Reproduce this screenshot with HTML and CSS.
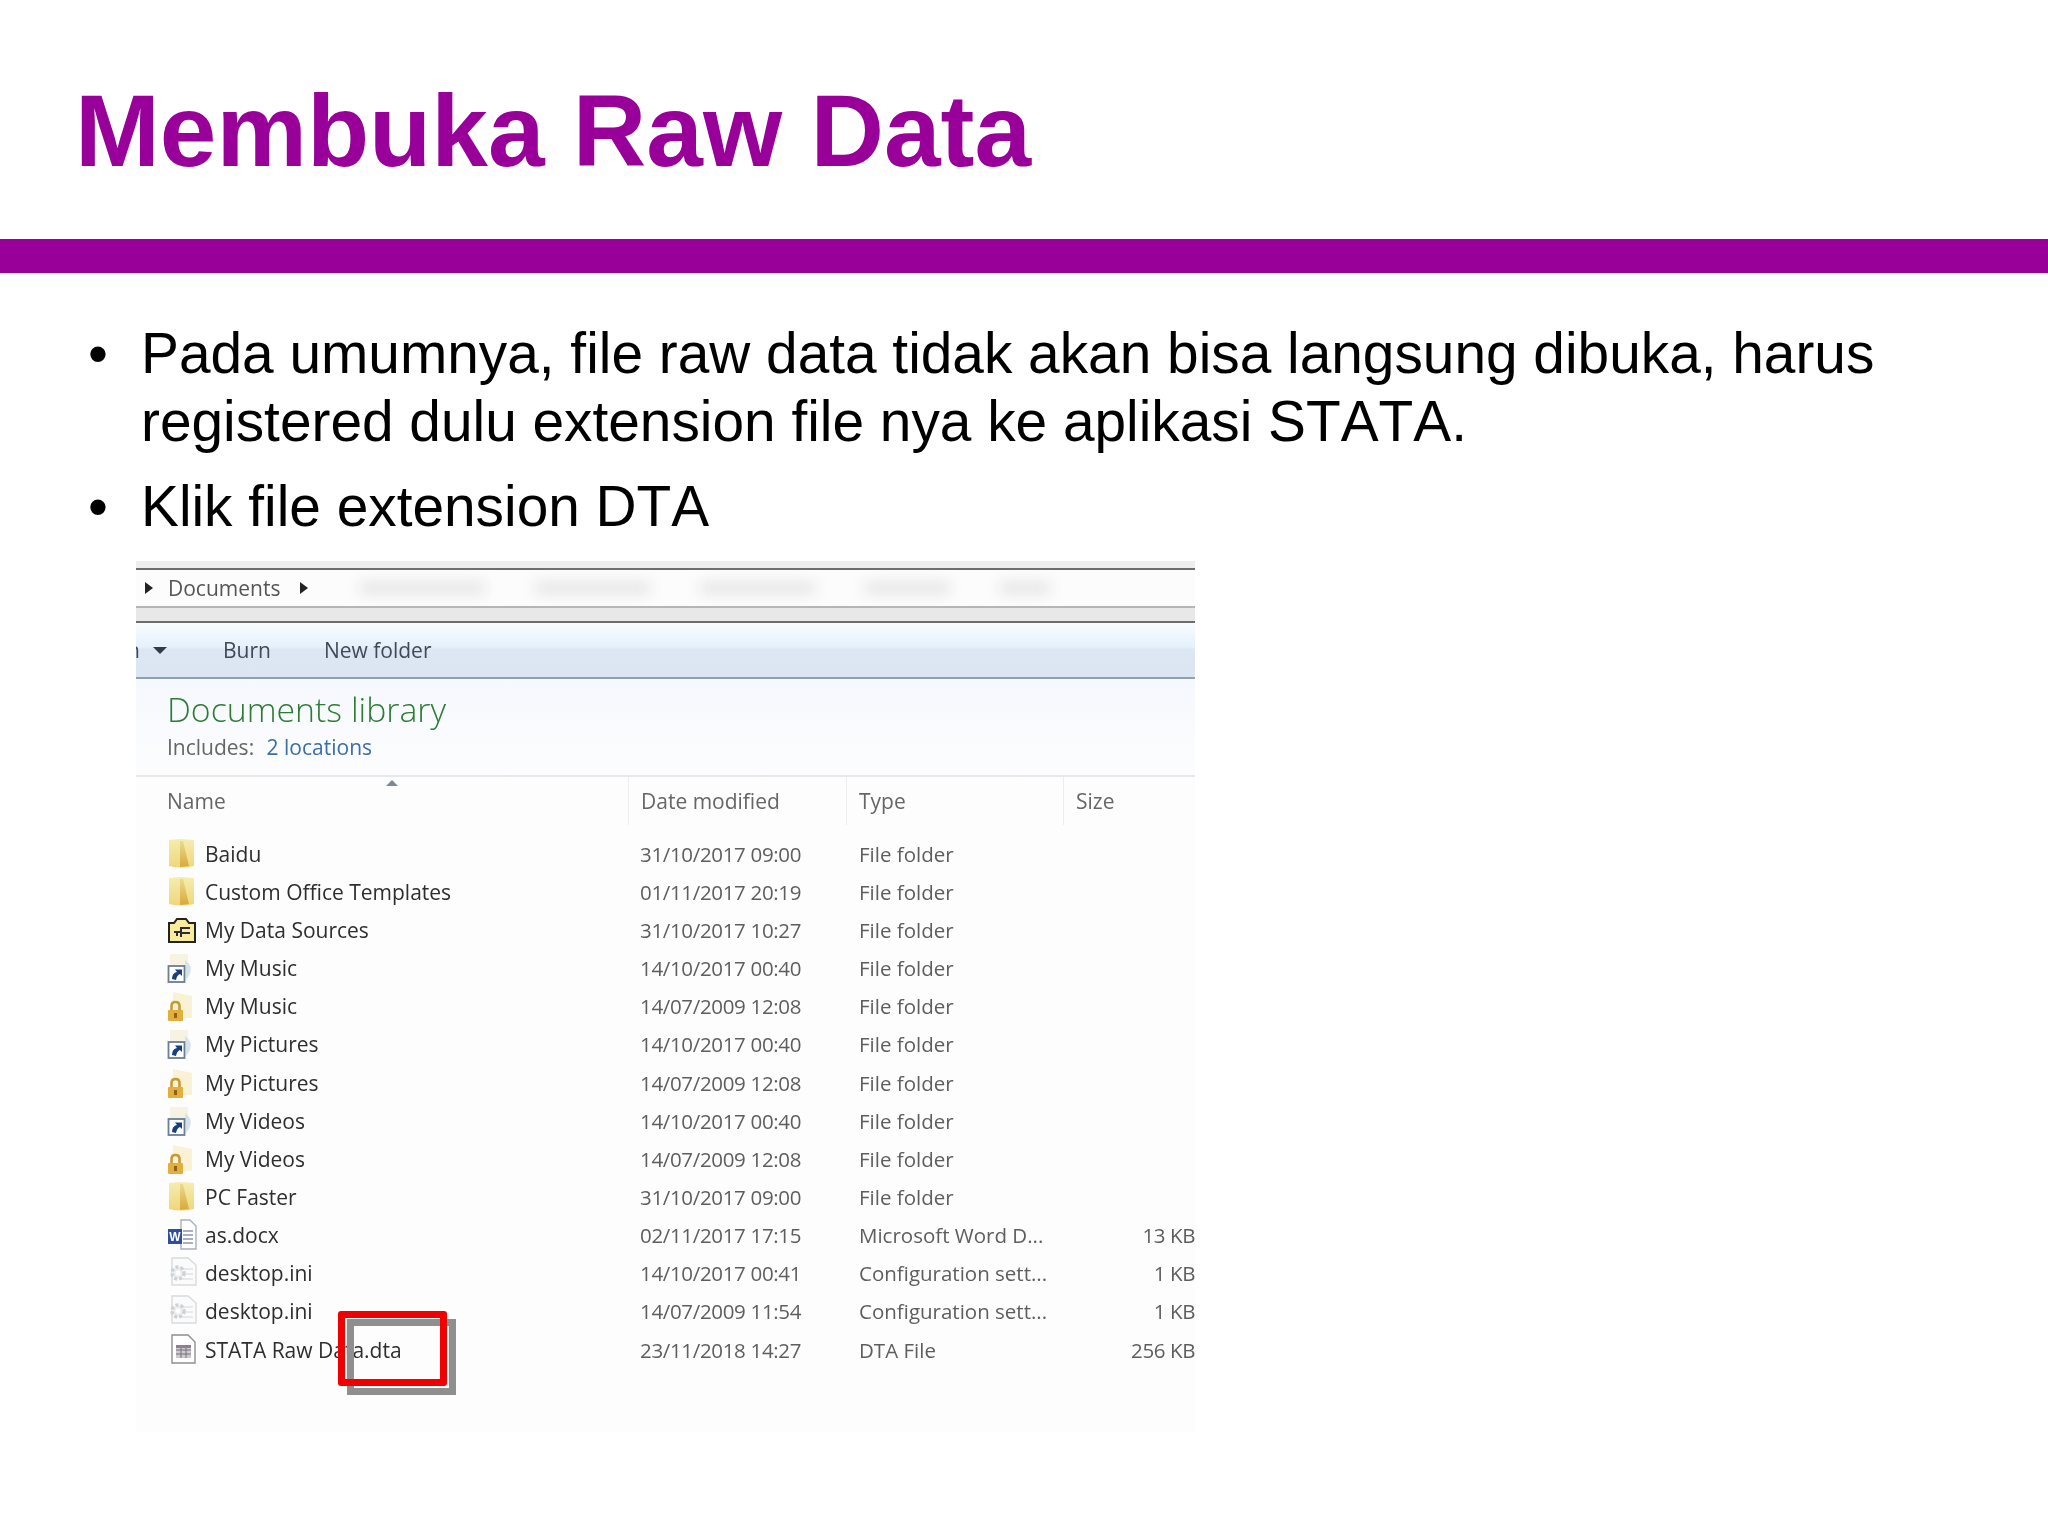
FILE: index.html
```html
<!DOCTYPE html>
<html lang="id">
<head>
  <meta charset="UTF-8" />
  <title>Membuka Raw Data</title>
  <link rel="stylesheet" href="styles.css">
</head>
<body>
  <svg class="defs" width="0" height="0">
    <defs>
      <linearGradient id="fold" x1="0" y1="0" x2="0" y2="1">
        <stop offset="0" stop-color="#f5edb0"/>
        <stop offset="1" stop-color="#f0d67a"/>
      </linearGradient>
      <linearGradient id="crease" x1="0" y1="0" x2="0" y2="1">
        <stop offset="0" stop-color="#e8dc8c"/>
        <stop offset="1" stop-color="#d9a93c"/>
      </linearGradient>
      <symbol id="i-folder" viewBox="0 0 28 30" overflow="visible">
        <path d="M2 2 L14 1 L27 2 V28 Q14 31 2 28 Z" fill="url(#fold)"/>
        <path d="M13 3 L16 3 L22 28 L13 29 Z" fill="url(#crease)"/>
      </symbol>
      <symbol id="i-source" viewBox="0 0 28 30" overflow="visible">
        <path d="M2 9 H7 L10 5 H19 L22 9 H28 V28 H2 Z" fill="#f8ec9a" stroke="#222" stroke-width="2"/>
        <path d="M7 18 H14 V14 H23 M23 19 H14 V23 M10 18 V22" fill="none" stroke="#2a2a38" stroke-width="2"/>
      </symbol>
      <symbol id="i-link" viewBox="0 0 28 30" overflow="visible">
        <path d="M3 2 H21 V18 H3 Z" fill="#f6f3e2"/>
        <path d="M18 8 Q29 16 19 28 Z" fill="#d5e2e8"/>
        <rect x="1.5" y="14" width="16" height="16" fill="#fff" stroke="#6a7f94" stroke-width="1.8"/>
        <path d="M5 27 Q5 21 10 20 L8 17.5 H15 V24 L13 22 Q10 23 9 28 Z" fill="#173f7d"/>
      </symbol>
      <symbol id="i-lock" viewBox="0 0 28 30" overflow="visible">
        <path d="M6 2 L25 6 V28 H6 Z" fill="#faf2d4"/>
        <path d="M4.5 21 V16 Q4.5 12 8.5 12 Q12.5 12 12.5 16 V21" fill="none" stroke="#c99a30" stroke-width="2.6"/>
        <rect x="1" y="20" width="15" height="11" rx="1" fill="#e3ae3e"/>
        <rect x="7" y="23" width="3" height="5" fill="#8a6414"/>
      </symbol>
      <symbol id="i-word" viewBox="0 0 28 30" overflow="visible">
        <path d="M14 1 H23 L29 7 V30 H14 Z" fill="#fff" stroke="#a8afbd" stroke-width="1.4"/>
        <path d="M16 12 H26 M16 16 H26 M16 20 H26 M16 24 H26" stroke="#8d98ad" stroke-width="1.4"/>
        <rect x="1" y="10" width="14" height="15" fill="#2f4f9d"/>
        <text x="8" y="22" class="word-w">W</text>
      </symbol>
      <symbol id="i-ini" viewBox="0 0 28 30" overflow="visible">
        <path d="M5 1 H21 L29 8 V28 H5 Z" fill="#fbfbfb" stroke="#d8dadc" stroke-width="1.4"/>
        <path d="M12 12 H26 M16 17 H26 M12 22 H26" stroke="#e2e4e6" stroke-width="1.4"/>
        <circle cx="11" cy="16" r="6" fill="#eceef0" stroke="#cfd2d5" stroke-width="3.4" stroke-dasharray="3 2"/>
        <circle cx="11" cy="16" r="2.4" fill="#fff"/>
      </symbol>
      <symbol id="i-stata" viewBox="0 0 28 30" overflow="visible">
        <path d="M5 1 H21 L28 8 V29 H5 Z" fill="#fff" stroke="#8f8f94" stroke-width="1.4"/>
        <rect x="9" y="11" width="15" height="13" fill="#cfc9cf"/>
        <path d="M9 16 H24 M9 20 H24 M14 11 V24 M19 11 V24" stroke="#77727c" stroke-width="1"/>
        <rect x="9" y="11" width="15" height="3" fill="#8d7f8f"/>
      </symbol>
    </defs>
  </svg>

  <header class="slide-head">
    <h1>Membuka Raw Data</h1>
  </header>
  <div class="band"></div>

  <ul class="points">
    <li>Pada umumnya, file raw data tidak akan bisa langsung dibuka, harus registered dulu extension file nya ke aplikasi STATA.</li>
    <li>Klik file extension DTA</li>
  </ul>

  <div class="explorer">
    <div class="strip"></div>
    <div class="crumbs">
      <span class="arrow"></span>
      <span class="crumb">Documents</span>
      <span class="arrow"></span>
      <div class="smudges">
        <i class="w140"></i><i class="w120"></i><i class="w120"></i><i class="w90"></i><i class="w60"></i>
      </div>
    </div>
    <div class="strip2"></div>
    <div class="toolbar">
      <span class="cut">n</span>
      <span class="down"></span>
      <span class="burn">Burn</span>
      <span>New folder</span>
    </div>
    <div class="pane">
      <div class="lib-title">Documents library</div>
      <div class="lib-sub">Includes: <a>2 locations</a></div>
      <div class="cols">
        <div class="col-name">Name<span class="sort"></span></div>
        <div>Date modified</div>
        <div>Type</div>
        <div>Size</div>
      </div>
      <div class="files">
        <div class="row"><div class="name"><svg class="ico"><use href="#i-folder"/></svg>Baidu</div><div class="date">31/10/2017 09:00</div><div>File folder</div><div></div></div>
        <div class="row"><div class="name"><svg class="ico"><use href="#i-folder"/></svg>Custom Office Templates</div><div class="date">01/11/2017 20:19</div><div>File folder</div><div></div></div>
        <div class="row"><div class="name"><svg class="ico"><use href="#i-source"/></svg>My Data Sources</div><div class="date">31/10/2017 10:27</div><div>File folder</div><div></div></div>
        <div class="row"><div class="name"><svg class="ico"><use href="#i-link"/></svg>My Music</div><div class="date">14/10/2017 00:40</div><div>File folder</div><div></div></div>
        <div class="row"><div class="name"><svg class="ico"><use href="#i-lock"/></svg>My Music</div><div class="date">14/07/2009 12:08</div><div>File folder</div><div></div></div>
        <div class="row"><div class="name"><svg class="ico"><use href="#i-link"/></svg>My Pictures</div><div class="date">14/10/2017 00:40</div><div>File folder</div><div></div></div>
        <div class="row"><div class="name"><svg class="ico"><use href="#i-lock"/></svg>My Pictures</div><div class="date">14/07/2009 12:08</div><div>File folder</div><div></div></div>
        <div class="row"><div class="name"><svg class="ico"><use href="#i-link"/></svg>My Videos</div><div class="date">14/10/2017 00:40</div><div>File folder</div><div></div></div>
        <div class="row"><div class="name"><svg class="ico"><use href="#i-lock"/></svg>My Videos</div><div class="date">14/07/2009 12:08</div><div>File folder</div><div></div></div>
        <div class="row"><div class="name"><svg class="ico"><use href="#i-folder"/></svg>PC Faster</div><div class="date">31/10/2017 09:00</div><div>File folder</div><div></div></div>
        <div class="row"><div class="name"><svg class="ico"><use href="#i-word"/></svg>as.docx</div><div class="date">02/11/2017 17:15</div><div>Microsoft Word D...</div><div class="size">13 KB</div></div>
        <div class="row"><div class="name"><svg class="ico"><use href="#i-ini"/></svg>desktop.ini</div><div class="date">14/10/2017 00:41</div><div>Configuration sett...</div><div class="size">1 KB</div></div>
        <div class="row"><div class="name"><svg class="ico"><use href="#i-ini"/></svg>desktop.ini</div><div class="date">14/07/2009 11:54</div><div>Configuration sett...</div><div class="size">1 KB</div></div>
        <div class="row"><div class="name"><svg class="ico"><use href="#i-stata"/></svg>STATA Raw Data.dta</div><div class="date">23/11/2018 14:27</div><div>DTA File</div><div class="size">256 KB</div></div>
      </div>
    </div>
    <div class="graybox"></div>
    <div class="redbox"></div>
  </div>
</body>
</html>
```

FILE: styles.css
```css
* {
  margin: 0;
  padding: 0;
  box-sizing: border-box;
}

body {
  background: #fff;
  font-family: "Liberation Sans", Arial, sans-serif;
  color: #000;
}

.defs {
  position: absolute;
}

.slide-head {
  height: 239px;
  padding: 75px 0 0 75px;
}

h1 {
  font-size: 101.8px;
  line-height: 112px;
  color: #990099;
  font-weight: bold;
  font-kerning: none;
}

.band {
  height: 34px;
  background: #990099;
}

.points {
  list-style: none;
  padding: 47px 140px 3px 141px;
  font-size: 56.8px;
  line-height: 68px;
  color: #000;
  font-kerning: none;
}

.points li {
  position: relative;
  margin-bottom: 17px;
}

.points li::before {
  content: "•";
  position: absolute;
  left: -53px;
}

/* pasted explorer screenshot */
.explorer {
  position: relative;
  margin-left: 136px;
  width: 1059px;
  height: 871px;
  overflow: hidden;
  background: #fdfdfe;
  font-family: "Open Sans", sans-serif;
  font-size: 20.5px;
  color: #555;
  filter: blur(0.7px);
}

.strip {
  height: 9px;
  background: #eeeeee;
  border-bottom: 2px solid #6d6d6d;
}

.crumbs {
  height: 38px;
  display: flex;
  align-items: center;
  padding-left: 9px;
  background: #fcfcfc;
  border-bottom: 2px solid #b5b5b5;
  font-size: 21px;
}

.arrow {
  width: 0;
  height: 0;
  border-left: 8px solid #222;
  border-top: 6px solid transparent;
  border-bottom: 6px solid transparent;
}

.crumb {
  margin: 0 20px 0 15px;
  color: #555;
}

.smudges {
  display: flex;
  gap: 50px;
  margin-left: 52px;
}

.smudges i {
  height: 12px;
  background: #e4e4e4;
  filter: blur(7px);
}

.w140 { width: 125px; }
.w120 { width: 115px; }
.w90 { width: 85px; }
.w60 { width: 50px; }

.strip2 {
  height: 15px;
  background: #e8e8e8;
  border-bottom: 2px solid #6d6d6d;
}

.toolbar {
  height: 56px;
  display: flex;
  align-items: center;
  background: linear-gradient(#f9fcff 0%, #e3f0fb 46%, #dce7f3 48%, #dce6f2 100%);
  border-bottom: 2px solid #8fa0b3;
  color: #3f4a57;
  font-size: 21px;
}

.cut {
  width: 4px;
  overflow: hidden;
  direction: rtl;
  margin-right: 13px;
}

.down {
  width: 0;
  height: 0;
  border-top: 7px solid #2f3b48;
  border-left: 7px solid transparent;
  border-right: 7px solid transparent;
}

.burn {
  margin: 0 53px 0 56px;
}

.pane {
  background: linear-gradient(#f5f8fd 0, #fdfdfe 100px);
}

.lib-title {
  padding: 8px 0 0 31px;
  font-size: 33.8px;
  line-height: 44px;
  font-weight: 300;
  color: #2c7d33;
}

.lib-sub {
  padding: 1px 0 0 31px;
  line-height: 30px;
  font-size: 21px;
  color: #666;
}

.lib-sub a {
  margin-left: 7px;
  color: #3a6ea8;
}

.cols,
.row {
  display: grid;
  grid-template-columns: 493px 218px 217px 131px;
}

.cols {
  height: 50px;
  margin-top: 13px;
  border-top: 2px solid #e6e8ea;
  align-items: center;
  color: #666;
  font-size: 21px;
}

.cols > div {
  height: 100%;
  display: flex;
  align-items: center;
  padding-left: 12px;
  border-right: 1px solid #eceef0;
}

.cols > .col-name {
  position: relative;
  padding-left: 31px;
}

.cols > div:last-child {
  border-right: 0;
}

.sort {
  position: absolute;
  top: 3px;
  left: 250px;
  border-bottom: 6px solid #7d8894;
  border-left: 6px solid transparent;
  border-right: 6px solid transparent;
}

.files {
  padding-top: 9.5px;
}

.row {
  height: 38.17px;
  align-items: center;
  color: #5e5e5e;
}

.row > div {
  padding-left: 12px;
  white-space: nowrap;
}

.row > .date {
  padding-left: 11px;
  letter-spacing: -0.33px;
}

.row > .name {
  display: flex;
  align-items: center;
  padding-left: 31px;
  font-size: 21px;
  color: #2e2e2e;
}

.ico {
  width: 28px;
  height: 30px;
  margin: -2px 10px 0 0;
  flex: none;
  overflow: visible;
}

.word-w {
  fill: #fff;
  font-family: "Liberation Sans", sans-serif;
  font-size: 12px;
  font-weight: bold;
  text-anchor: middle;
}

.row > .size {
  padding: 0;
  text-align: right;
  letter-spacing: -0.4px;
}

/* annotation boxes on top of the screenshot */
.graybox {
  position: absolute;
  left: 211px;
  top: 758px;
  width: 109px;
  height: 76px;
  border: 7px solid #8f8f8f;
}

.redbox {
  position: absolute;
  left: 202px;
  top: 750px;
  width: 109px;
  height: 75px;
  border: 7px solid #f00000;
  border-radius: 3px;
}
```
